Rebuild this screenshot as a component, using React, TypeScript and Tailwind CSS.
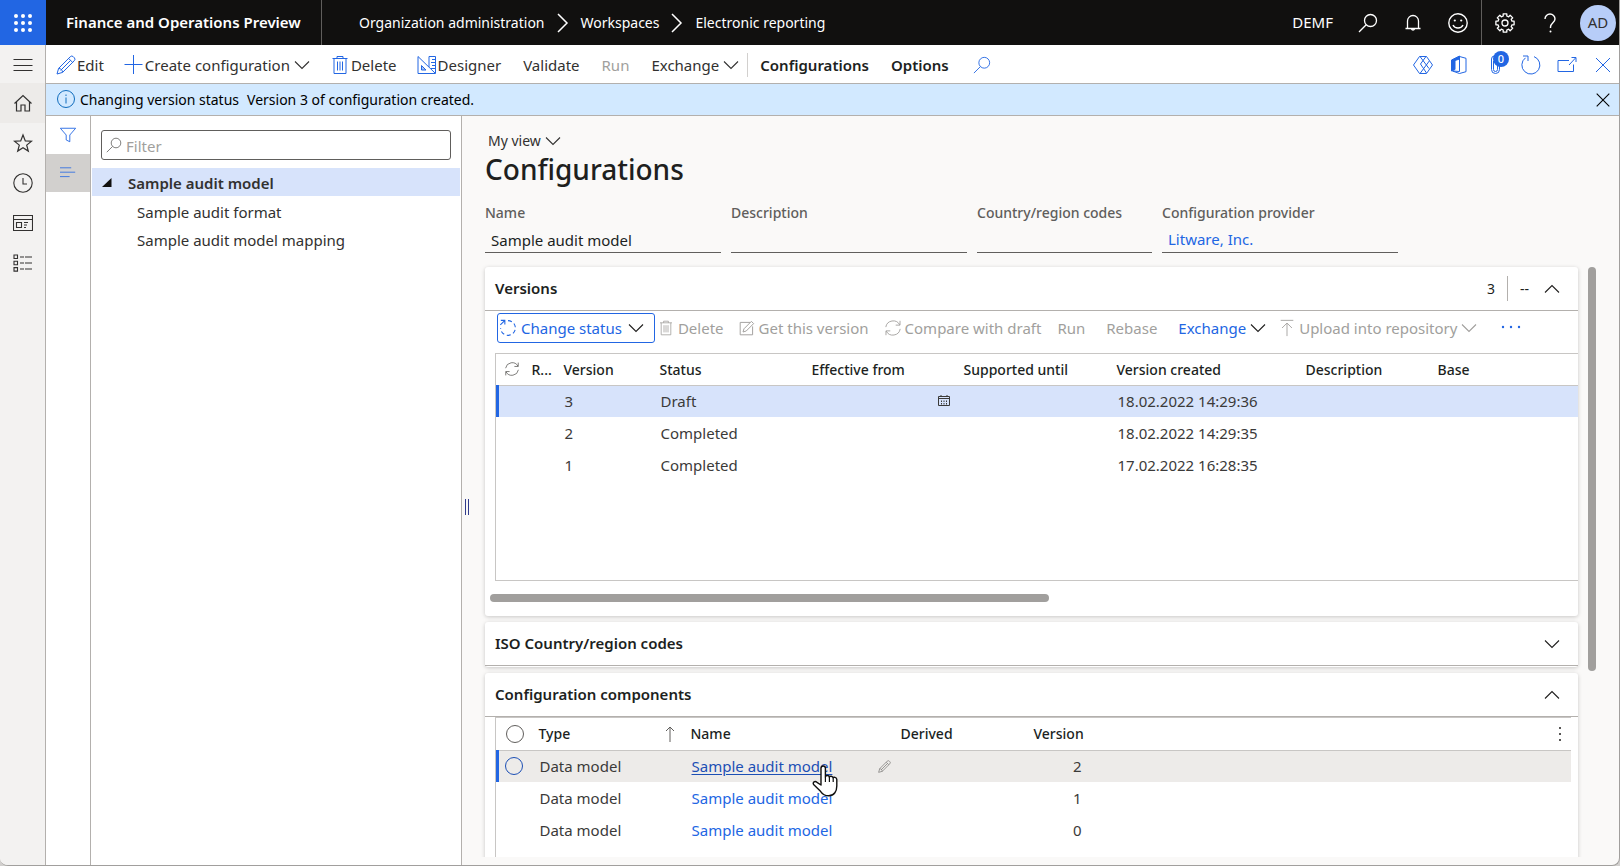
import type { ReactNode } from "react";

/* ---------- icons ---------- */

type IconProps = { size?: number; className?: string; sw?: number };

function Svg({ size = 20, className = "", sw = 1, children }: IconProps & { children: ReactNode }) {
  return (
    <svg
      width={size}
      height={size}
      viewBox="0 0 20 20"
      fill="none"
      stroke="currentColor"
      strokeWidth={sw}
      className={`shrink-0 ${className}`}
      aria-hidden="true"
    >
      {children}
    </svg>
  );
}

const Pencil = (p: IconProps) => (
  <Svg {...p}>
    <path d="M1 19l1.6-5.6L14.2 1.8a2.2 2.2 0 0 1 3.2 0l.8.8a2.2 2.2 0 0 1 0 3.2L6.6 17.4 1 19zM2.6 13.4c2.4.2 3.8 1.6 4 4M12.6 3.4l4 4M4.6 15.4L14.6 5.4" />
  </Svg>
);
const Plus = (p: IconProps) => (
  <Svg {...p}>
    <path d="M.5 9.5h18M9.5 0v19" />
  </Svg>
);
const Trash = (p: IconProps) => (
  <Svg {...p}>
    <path d="M2.500 3.500h15M7 3.500v-2h6v2M4 3.500v15h12v-15M7.500 6.500v9M10 6.500v9M12.500 6.500v9" />
  </Svg>
);
const Designer = (p: IconProps) => (
  <Svg {...p}>
    <path d="M1 1.500v17h17.500L1 1.500zM12 12V1.500h6.500V18M18 4.500h-3M18 7.500h-4M18 10.500h-3M18 13.500h-4" />
    <path d="M4.500 10.500V15H9z" fill="currentColor" fillOpacity="0.4" />
  </Svg>
);
const Search = (p: IconProps) => (
  <Svg {...p}>
    <circle cx="12.500" cy="7.500" r="6" />
    <path d="M8.200 11.800L1 19" />
  </Svg>
);
const Close = (p: IconProps) => (
  <Svg {...p}>
    <path d="M3 3l14 14M17 3L3 17" />
  </Svg>
);
const Sync = (p: IconProps) => (
  <Svg {...p}>
    <path d="M2 9a8.300 8.300 0 0 1 15.500-2.500M17.800 2v4.800h-4.800M18 11a8.300 8.300 0 0 1-15.500 2.500M2.200 18v-4.800H7" />
  </Svg>
);

function Chevron({ dir = "down", className = "" }: { dir?: "down" | "up"; className?: string }) {
  return (
    <svg width="16" height="10" viewBox="0 0 16 10" fill="none" stroke="currentColor" strokeWidth="1.100" className={`shrink-0 ${className}`} aria-hidden="true">
      <path d={dir === "down" ? "M1 1.500l7 7 7-7" : "M1 8.500l7-7 7 7"} />
    </svg>
  );
}

function gearPath() {
  const teeth = 8;
  const step = (Math.PI * 2) / teeth;
  const pts: string[] = [];
  for (let i = 0; i < teeth; i++) {
    const a = i * step;
    [
      [-0.25, 7.2],
      [-0.2, 9.3],
      [0.2, 9.3],
      [0.25, 7.2],
    ].forEach(([o, r]) => pts.push(`${(10 + r * Math.cos(a + o)).toFixed(2)} ${(10 + r * Math.sin(a + o)).toFixed(2)}`));
  }
  return `M${pts.join("L")}Z`;
}

const Gear = (p: IconProps) => (
  <Svg {...p}>
    <path d={gearPath()} strokeLinejoin="round" />
    <circle cx="10" cy="10" r="3" />
  </Svg>
);

/* ---------- building blocks ---------- */

function Tool({ icon, label, menu, tone = "" }: { icon?: ReactNode; label: string; menu?: string; tone?: string }) {
  return (
    <button type="button" className={`flex items-center whitespace-nowrap ${tone}`}>
      {icon}
      {label}
      {menu !== undefined && <Chevron className={`ml-1 ${menu}`} />}
    </button>
  );
}

function IconButton({ label, children, className = "" }: { label: string; children: ReactNode; className?: string }) {
  return (
    <button type="button" aria-label={label} className={`flex items-center justify-center ${className}`}>
      {children}
    </button>
  );
}

function Field({ id, label, width, value = "" }: { id: string; label: string; width: string; value?: string }) {
  return (
    <div className={width}>
      <label htmlFor={id} className="block text-[14px] leading-5 font-medium text-[#605e5c]">
        {label}
      </label>
      <input id={id} readOnly defaultValue={value} className="mt-1 h-[26px] w-full border-b border-[#605e5c] bg-transparent px-1.5 text-[15px] outline-none" />
    </div>
  );
}

function TopBar() {
  return (
    <header className="flex h-[45px] shrink-0 bg-[#11100f] text-[14px] text-white">
      <IconButton label="App launcher" className="w-[46px] bg-[#2266e3]">
        <svg width="20" height="20" viewBox="0 0 20 20" fill="currentColor" aria-hidden="true">
          {[3, 10, 17].map((y) => [3, 10, 17].map((x) => <circle key={`${x}-${y}`} cx={x} cy={y} r="2" />))}
        </svg>
      </IconButton>
      <div className="flex w-[276px] items-center border-r border-[#605e5c] pl-5 text-[15px] font-semibold whitespace-nowrap">Finance and Operations Preview</div>
      <nav aria-label="Breadcrumb" className="flex items-center gap-3 pl-[37px] whitespace-nowrap">
        <a href="#organization">Organization administration</a>
        <svg width="12" height="20" viewBox="0 0 12 20" fill="none" stroke="currentColor" strokeWidth="1.500" aria-hidden="true">
          <path d="M1 1l9 9-9 9" />
        </svg>
        <a href="#workspaces">Workspaces</a>
        <svg width="12" height="20" viewBox="0 0 12 20" fill="none" stroke="currentColor" strokeWidth="1.500" aria-hidden="true">
          <path d="M1 1l9 9-9 9" />
        </svg>
        <a href="#reporting">Electronic reporting</a>
      </nav>
      <div className="ml-auto flex items-center pr-[3px]">
        <button type="button" className="mr-3 text-[15px]">DEMF</button>
        <IconButton label="Search" className="w-[45px]">
          <Search sw={1.3} />
        </IconButton>
        <IconButton label="Notifications" className="w-[45px]">
          <Svg sw={1.3}>
            <path d="M4.500 15.500V8a5.500 5.500 0 0 1 11 0v7.500M2.500 15.500h15M8.500 16a1.600 1.600 0 0 0 3 0" />
          </Svg>
        </IconButton>
        <IconButton label="Feedback" className="w-[46px]">
          <Svg sw={1.4}>
            <circle cx="10" cy="10" r="9.200" />
            <path d="M5 12c1.800 4 8.200 4 10 0" />
            <circle cx="6.800" cy="7.500" r="1.100" fill="currentColor" stroke="none" />
            <circle cx="13.200" cy="7.500" r="1.100" fill="currentColor" stroke="none" />
          </Svg>
        </IconButton>
        <IconButton label="Settings" className="h-full w-[46px] border-l border-[#605e5c]">
          <Gear sw={1.3} />
        </IconButton>
        <IconButton label="Help" className="w-[45px]">
          <Svg sw={1.4}>
            <path d="M5 6a5 5 0 0 1 10 0c0 3.500-4.500 4-4.500 8v1" />
            <circle cx="10.500" cy="18.500" r="1" fill="currentColor" stroke="none" />
          </Svg>
        </IconButton>
        <button type="button" aria-label="Account" className="ml-2 flex size-9 items-center justify-center rounded-full bg-[#b7cdf8] text-[15px] text-[#323130]">
          AD
        </button>
      </div>
    </header>
  );
}

function NavRail() {
  return (
    <nav aria-label="Main" className="flex w-[46px] shrink-0 flex-col border-r border-[#b3b0ad] bg-[#f3f2f1] text-[#323130]">
      <IconButton label="Expand navigation" className="h-[38px]">
        <Svg>
          <path d="M.5 5.500h19M.5 11.500h19M.5 16.500h19" />
        </Svg>
      </IconButton>
      <IconButton label="Home" className="h-10 bg-[#edebe9]">
        <Svg sw={1.2}>
          <path d="M1.500 10.500L10 2.500l8.500 8M3.500 9v9h4.500v-6h4v6h4.500V9" />
        </Svg>
      </IconButton>
      <IconButton label="Favorites" className="h-10">
        <Svg sw={1.2}>
          <path d="M10 2l2.300 5.900 6.200.3-4.800 3.900 1.600 6L10 14.700l-5.300 3.400 1.600-6-4.800-3.900 6.200-.3z" />
        </Svg>
      </IconButton>
      <IconButton label="Recent" className="h-10">
        <Svg sw={1.1}>
          <circle cx="10" cy="10" r="9.200" />
          <path d="M10 5v6h4" />
        </Svg>
      </IconButton>
      <IconButton label="Workspaces" className="h-10">
        <Svg sw={1.1}>
          <path d="M.5 2.500h19v15H.5zM.5 6.500h19M3.500 9.500h5v5h-5zM11 9.500h4M11 12h3M11 14.500h2" />
        </Svg>
      </IconButton>
      <IconButton label="Modules" className="h-10">
        <Svg sw={1.1}>
          <path d="M1 2h3.500v3.500H1zM1 8.300h3.500v3.500H1zM1 14.600h3.500v3.500H1zM7 4h4M12 4h7M7 10h4M12 10h7M7 16h4M12 16h7" />
        </Svg>
      </IconButton>
    </nav>
  );
}

function ActionPane() {
  return (
    <div className="flex h-[39px] shrink-0 items-center border-b border-[#b3b0ad] bg-white pt-0.5 pl-2.5 text-[15px]">
      <div className="flex items-center gap-5 text-[#323130]">
        <Tool icon={<Pencil className="mr-px text-[#2266e3]" />} label="Edit" />
        <Tool icon={<Plus className="mr-px text-[#2266e3]" />} label="Create configuration" menu="" />
        <Tool icon={<Trash className="mr-px text-[#2266e3]" />} label="Delete" />
        <Tool icon={<Designer className="mr-px text-[#2266e3]" />} label="Designer" />
      </div>
      <div className="flex items-center gap-[22px] pl-[22px] text-[#323130]">
        <Tool label="Validate" />
        <Tool label="Run" tone="text-[#a19f9d]" />
        <Tool label="Exchange" menu="" />
      </div>
      <div className="ml-2 flex h-6 items-center gap-[22px] border-l border-[#d2d0ce] pl-3 font-semibold text-[#201f1e]">
        <Tool label="Configurations" />
        <Tool label="Options" />
      </div>
      <IconButton label="Search actions" className="ml-6 text-[#2266e3]">
        <Search size={18} />
      </IconButton>
      <div className="ml-auto flex items-center gap-4 pr-1.5 text-[#2266e3]">
        <IconButton label="Power Apps">
          <Svg>
            <path d="M6.500 1.500h7L19.500 10l-6 8.500h-7L.5 10zM7 1.500l9 12M13 1.500L7.500 9l6 9M16.300 6L7 18.500M6.500 1.500" />
          </Svg>
        </IconButton>
        <IconButton label="Open in Microsoft Office">
          <Svg>
            <path d="M2.500 5l8-4v3L6 5.500v9L2.500 16z" fill="currentColor" />
            <path d="M10.500 1.500l6.500 1.800v13.400l-6.500 1.800-7-2.500 7 .5V1.500z" />
          </Svg>
        </IconButton>
        <IconButton label="Attachments" className="relative">
          <Svg>
            <path d="M6.500 4v10.500a4 4 0 0 0 8 0V5M14.500 5v-2M8.500 6v8.500a2 2 0 0 0 4 0V5M6.500 4a3 3 0 0 1 6 0v4" />
          </Svg>
          <span className="absolute -top-1 left-2 flex size-4 items-center justify-center rounded-full bg-[#2266e3] text-[11px] font-medium text-white">0</span>
        </IconButton>
        <IconButton label="Refresh">
          <Svg>
            <path d="M13 1.600a9 9 0 1 1-8.500 1.200M2 1h5v5" />
          </Svg>
        </IconButton>
        <IconButton label="Open in new window">
          <Svg>
            <path d="M12 5.500H1v11h15.500v-7M12 10L18.500 3M14.500 2.500H19V7" />
          </Svg>
        </IconButton>
        <IconButton label="Close">
          <Close />
        </IconButton>
      </div>
    </div>
  );
}

function MessageBar() {
  return (
    <div role="status" className="flex h-8 shrink-0 items-center border-b border-[#b3b0ad] bg-[#d2e9ff] pr-[7px] pl-2.5 text-[14px] text-black">
      <Svg className="mr-1 text-[#0f6cbd]">
        <circle cx="10" cy="9" r="8.500" />
        <path d="M10 7.500v6M10 4.500v1.500" />
      </Svg>
      <span className="mr-2">Changing version status</span>
      <span>Version 3 of configuration created.</span>
      <IconButton label="Dismiss message" className="ml-auto">
        <Close size={18} sw={1.2} />
      </IconButton>
    </div>
  );
}

function TreePanel() {
  return (
    <>
      <div className="flex w-[45px] shrink-0 flex-col border-r border-[#b3b0ad] bg-white text-[#2266e3]">
        <IconButton label="Filters" className="h-[38px]">
          <Svg size={18}>
            <path d="M1.500 2.500h17L12 10v7.500l-4-2V10L1.500 2.500z" />
          </Svg>
        </IconButton>
        <IconButton label="Tree list" className="h-[38px] bg-[#d2d0ce]">
          <Svg size={16}>
            <path d="M0 3.500h14M0 9h19M0 14.500h12" />
          </Svg>
        </IconButton>
      </div>
      <aside className="w-[371px] shrink-0 border-r border-[#b3b0ad] bg-white pt-[14px] text-[15px] text-[#323130]">
        <div className="mx-2.5 flex h-[30px] items-center rounded-[3px] border border-[#605e5c] px-1">
          <Search size={16} className="text-[#605e5c]" />
          <input aria-label="Filter" placeholder="Filter" className="ml-1 w-full bg-transparent pt-0.5 outline-none placeholder:text-[#a19f9d]" />
        </div>
        <ul role="tree" className="mt-2 leading-7">
          <li role="treeitem" aria-expanded="true" aria-selected="true">
            <div className="mx-px flex h-7 items-center bg-[#d7e3fb] pt-0.5 font-semibold">
              <svg width="10" height="10" viewBox="0 0 10 10" fill="#11100f" className="mr-4 ml-2.5" aria-hidden="true">
                <path d="M9.500 0v9H0z" />
              </svg>
              Sample audit model
            </div>
            <ul role="group" className="pt-0.5 pl-[46px]">
              <li role="treeitem">Sample audit format</li>
              <li role="treeitem">Sample audit model mapping</li>
            </ul>
          </li>
        </ul>
      </aside>
    </>
  );
}

function Card({ title, open, extra, children }: { title: string; open: boolean; extra?: ReactNode; children?: ReactNode }) {
  return (
    <section className="rounded-[3px] bg-white shadow-[0_1px_4px_rgba(0,0,0,0.2)]">
      <div className="flex h-11 items-center border-b border-[#b3b0ad] pr-[18px] pl-2.5">
        <h2 className="text-[15px] font-semibold text-[#201f1e]">{title}</h2>
        <div className="ml-auto flex items-center text-[14px]">
          {extra}
          <IconButton label={open ? `Collapse ${title}` : `Expand ${title}`}>
            <Chevron dir={open ? "up" : "down"} />
          </IconButton>
        </div>
      </div>
      {children}
    </section>
  );
}

const versions = [
  { version: "3", status: "Draft", created: "18.02.2022 14:29:36" },
  { version: "2", status: "Completed", created: "18.02.2022 14:29:35" },
  { version: "1", status: "Completed", created: "17.02.2022 16:28:35" },
];

function VersionsCard() {
  return (
    <Card
      title="Versions"
      open
      extra={
        <>
          <span className="mr-3">3</span>
          <span className="mr-[15px] border-l border-[#b3b0ad] py-0.5 pl-3">--</span>
        </>
      }
    >
      <div className="flex items-center pt-0.5 pl-3 text-[15px] text-[#a19f9d]">
        <button type="button" className="mr-[3px] flex h-[30px] items-center rounded-[3px] border border-[#2266e3] pr-2.5 pl-px whitespace-nowrap text-[#2266e3]">
          <Svg size={18} sw={1.2} className="mr-1">
            <path d="M10 1.800a8.200 8.200 0 1 1-8.200 8.200" strokeDasharray="4.500 3" />
            <path d="M1.500 6.500L6 2M2 1.500h4.500V6" />
          </Svg>
          Change status
          <Chevron className="ml-1.5 text-[#201f1e]" />
        </button>
        <div className="flex items-center gap-[15px]">
          <Tool icon={<Trash size={16} className="mr-1" />} label="Delete" />
          <Tool
            icon={
              <Svg size={16} className="mr-1" sw={1.2}>
                <path d="M14 3H1.500v15.500H17V8M5 15l1.200-4L15.500 1.700l2.800 2.800L9 13.800 5 15z" />
              </Svg>
            }
            label="Get this version"
          />
          <Tool icon={<Sync size={18} className="mr-[3px]" />} label="Compare with draft" />
        </div>
        <div className="flex items-center gap-[21px] pl-4">
          <Tool label="Run" />
          <Tool label="Rebase" />
          <Tool label="Exchange" tone="text-[#2266e3]" menu="text-[#201f1e]" />
        </div>
        <div className="flex items-center gap-6 pl-3">
          <Tool
            icon={
              <Svg size={18} className="mr-[3px]">
                <path d="M3 1.500h14M10 19V4.500M4.500 10L10 4.500l5.500 5.500" />
              </Svg>
            }
            label="Upload into repository"
            menu=""
          />
          <IconButton label="More actions" className="text-[#2266e3]">
            <Svg>
              <g fill="currentColor" stroke="none">
                <circle cx="2" cy="9" r="1.200" />
                <circle cx="10" cy="9" r="1.200" />
                <circle cx="18" cy="9" r="1.200" />
              </g>
            </Svg>
          </IconButton>
        </div>
      </div>
      <div className="mt-2.5 ml-2.5 min-h-[228px] border-y border-l border-[#c8c6c4]">
        <table className="w-full table-fixed text-left text-[15px]">
          <colgroup>
            <col className="w-[30px]" />
            <col className="w-8" />
            <col className="w-24" />
            <col className="w-[152px]" />
            <col className="w-[152px]" />
            <col className="w-[153px]" />
            <col className="w-[189px]" />
            <col className="w-[132px]" />
            <col />
          </colgroup>
          <thead className="text-[14px] text-[#201f1e]">
            <tr className="h-[31px] border-b border-[#c8c6c4] *:pl-1 *:font-medium">
              <th aria-label="Refresh">
                <Sync size={16} className="ml-0.5 text-[#605e5c]" />
              </th>
              <th>R...</th>
              <th>Version</th>
              <th>Status</th>
              <th>Effective from</th>
              <th>Supported until</th>
              <th>Version created</th>
              <th>Description</th>
              <th>Base</th>
            </tr>
          </thead>
          <tbody className="text-[#3b3a39]">
            {versions.map((v, i) => (
              <tr key={v.version} className={`h-8 *:pl-[5px] ${i === 0 ? "bg-[#d7e3fb]" : ""}`}>
                <td className={i === 0 ? "border-l-3 border-[#2266e3]" : ""} />
                <td />
                <td>{v.version}</td>
                <td>{v.status}</td>
                <td>
                  {i === 0 && (
                    <svg width="12" height="12" viewBox="0 0 12 12" fill="none" stroke="currentColor" className="mr-2.5 ml-auto" aria-hidden="true">
                      <path d="M.5 1.500h11v9H.5zM.5 3.500h11M3 0v2M9 0v2M3.500 5.500v1.500M6 5.500v1.500M8.500 5.500v1.500M3.500 8v1.500M6 8v1.500M8.500 8v1.500" />
                    </svg>
                  )}
                </td>
                <td />
                <td>{v.created}</td>
                <td />
                <td />
              </tr>
            ))}
          </tbody>
        </table>
      </div>
      <div className="px-[5px] pt-[13px] pb-[14px]">
        <div className="h-2 w-[51.6%] rounded-full bg-[#a19f9d]" />
      </div>
    </Card>
  );
}

function HandCursor() {
  return (
    <svg width="26" height="32" viewBox="0 0 26 32" className="pointer-events-none absolute top-2.5 left-[120px] z-10" aria-hidden="true">
      <path
        d="M9 20V3.200a2.200 2.200 0 0 1 4.400 0V12c0-2 4-2 4 .5 0-2 3.800-1.500 3.800.8 0-1.600 3.600-1.300 3.600 1.200v6.500c0 5-2.500 9.800-8 9.800-4.500 0-6.300-1.500-8.300-4.500L1.600 19.500c-1.200-2.200 1.200-4.200 3.400-2.200L9 20z"
        fill="#fff"
        stroke="#11100f"
        strokeWidth="1.400"
        strokeLinejoin="round"
      />
      <path d="M13.400 12v5M17.400 12.500V17M21.200 13.500V17" stroke="#11100f" strokeWidth="1.200" fill="none" />
    </svg>
  );
}

const components = ["2", "1", "0"];

function ComponentsCard() {
  return (
    <Card title="Configuration components" open>
      <div className="mr-[7px] ml-2.5 h-[220px] border-t border-l border-[#c8c6c4]">
        <table className="w-full table-fixed text-left text-[15px]">
          <colgroup>
            <col className="w-[37px]" />
            <col className="w-[152px]" />
            <col className="w-[210px]" />
            <col className="w-[133px]" />
            <col className="w-[60px]" />
            <col />
          </colgroup>
          <thead className="text-[14px] text-[#201f1e]">
            <tr className="h-8 border-b border-[#c8c6c4] *:pl-1 *:font-medium">
              <th>
                <input type="checkbox" aria-label="Select all" className="ml-1 block size-[18px] appearance-none rounded-full border border-[#605e5c]" />
              </th>
              <th>
                <span className="flex items-center justify-between pr-3">
                  Type
                  <svg width="10" height="16" viewBox="0 0 10 16" fill="none" stroke="#605e5c" aria-hidden="true">
                    <path d="M5 16V1M1 5l4-4 4 4" />
                  </svg>
                </span>
              </th>
              <th>Name</th>
              <th>Derived</th>
              <th>Version</th>
              <th>
                <button type="button" aria-label="Grid options" className="mr-2 ml-auto block">
                  <svg width="6" height="16" viewBox="0 0 6 16" fill="currentColor" aria-hidden="true">
                    <circle cx="3" cy="2" r="1" />
                    <circle cx="3" cy="8" r="1" />
                    <circle cx="3" cy="14" r="1" />
                  </svg>
                </button>
              </th>
            </tr>
          </thead>
          <tbody className="text-[#3b3a39]">
            {components.map((version, i) => (
              <tr key={version} className={`h-8 ${i === 0 ? "bg-[#edebe9]" : ""}`}>
                <td className={i === 0 ? "border-l-3 border-[#2266e3]" : ""}>
                  {i === 0 && <input type="checkbox" aria-label="Select row" className="ml-1.5 block size-[18px] appearance-none rounded-full border border-[#1c4fb5]" />}
                </td>
                <td className="pl-[5px]">Data model</td>
                <td className="pl-[5px]">
                  <span className="relative flex items-center justify-between pr-1.5">
                    <a href="#model" className={i === 0 ? "text-[#1c4fb5] underline underline-offset-2" : "text-[#2266e3]"}>
                      Sample audit model
                    </a>
                    {i === 0 && <Pencil size={13} className="text-[#8a8886]" sw={1.3} />}
                    {i === 0 && <HandCursor />}
                  </span>
                </td>
                <td />
                <td className="pr-2 text-right">{version}</td>
                <td />
              </tr>
            ))}
          </tbody>
        </table>
      </div>
    </Card>
  );
}

export default function App() {
  return (
    <div className="h-screen bg-[#d2d0ce] font-['Noto_Sans','Open_Sans',sans-serif] text-[#201f1e]">
      <div className="flex h-full flex-col overflow-hidden rounded-b-lg border-r border-b border-[#a19f9d] bg-[#faf9f8]">
        <TopBar />
        <div className="flex min-h-0 flex-1">
          <NavRail />
          <div className="flex min-w-0 flex-1 flex-col">
            <ActionPane />
            <MessageBar />
            <div className="flex min-h-0 flex-1">
              <TreePanel />
              <div className="flex w-[7px] shrink-0 items-center justify-end pt-8">
                <div className="h-4 w-1 border-x border-[#323c8c]" />
              </div>
              <main className="flex min-w-0 flex-1 flex-col pb-2">
                <div className="shrink-0 pl-4">
                  <button type="button" className="mt-[13px] ml-[3px] flex items-center text-[14px] leading-6 text-[#323130]">
                    My view
                    <Chevron className="ml-1" />
                  </button>
                  <h1 className="text-[28px] leading-8 font-medium">Configurations</h1>
                  <div className="mt-[18px] flex gap-2.5">
                    <Field id="name" label="Name" width="w-[236px]" value="Sample audit model" />
                    <Field id="description" label="Description" width="w-[236px]" />
                    <Field id="codes" label="Country/region codes" width="w-[175px]" />
                    <div className="w-[236px]">
                      <div className="text-[14px] leading-5 font-medium text-[#605e5c]">Configuration provider</div>
                      <div className="mt-1 h-[26px] border-b border-[#605e5c] px-1.5 text-[15px] leading-[25px]">
                        <a href="#litware" className="text-[#2266e3]">
                          Litware, Inc.
                        </a>
                      </div>
                    </div>
                  </div>
                </div>
                <div className="mt-2.5 flex min-h-0 flex-1 overflow-hidden pr-[23px] pl-3">
                  <div className="flex min-w-0 flex-1 flex-col gap-1.5 overflow-hidden px-1 pt-1 pr-2.5">
                    <VersionsCard />
                    <Card title="ISO Country/region codes" open={false}>
                      <div className="h-px" />
                    </Card>
                    <ComponentsCard />
                  </div>
                  <div className="mt-1 h-[404px] w-2 shrink-0 rounded-full bg-[#a19f9d]" />
                </div>
              </main>
            </div>
          </div>
        </div>
      </div>
    </div>
  );
}
